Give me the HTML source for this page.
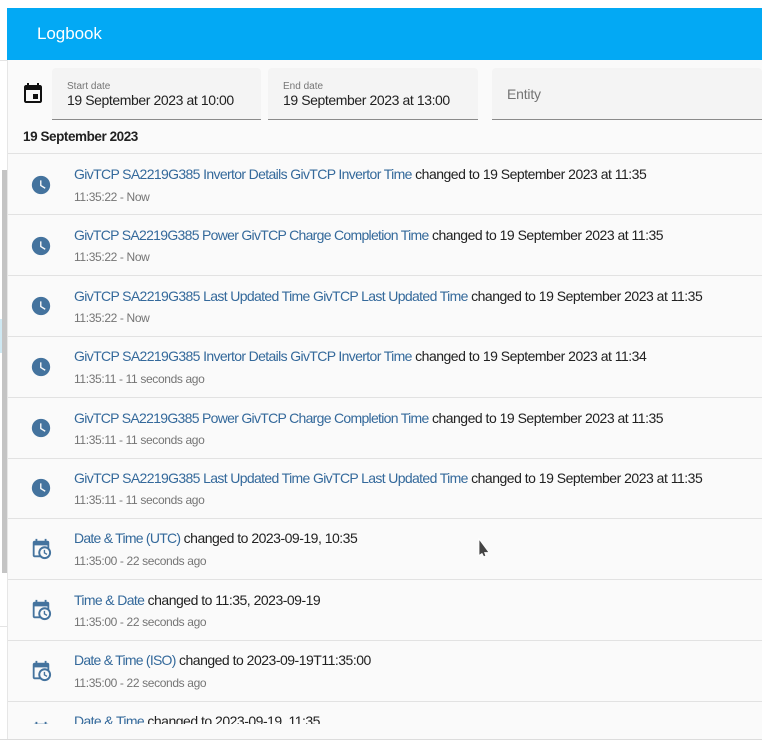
<!DOCTYPE html>
<html><head><meta charset="utf-8">
<style>
html,body{margin:0;padding:0;width:762px;height:748px;overflow:hidden;background:#fff;font-family:"Liberation Sans",sans-serif}
.a{position:absolute}
#page{position:absolute;left:7px;top:8px;width:755px;height:732px;background:#fafafa;border-left:1px solid #e6e6e6;box-sizing:border-box}
#hdr{position:absolute;left:7px;top:8px;width:755px;height:52px;background:#03a9f4}
#hdr span{position:absolute;left:30px;top:16px;font-size:17px;color:#fff;letter-spacing:-.05px}
.fld{position:absolute;top:68px;height:52px;background:#f4f4f4;border-bottom:1px solid #8a8a8a;box-sizing:border-box;border-radius:4px 4px 0 0}
.fld .l{position:absolute;left:15px;top:13px;font-size:10px;color:#757575;white-space:nowrap}
.fld .v{position:absolute;left:15px;top:24px;font-size:14px;color:#212121;white-space:nowrap;letter-spacing:-.41px}
.sep{position:absolute;left:8px;width:754px;height:1px;background:#e2e2e2}
.t{position:absolute;left:74px;font-size:14px;line-height:16px;white-space:nowrap;color:#212121;letter-spacing:-.5px}
.t b{font-weight:400;color:#34699b;letter-spacing:-.64px}
.t b.p{letter-spacing:-.7px}
.t b.d{letter-spacing:-.75px}
.s{position:absolute;left:74px;font-size:12px;line-height:14px;white-space:nowrap;color:#757575;letter-spacing:-.36px}
svg.i{position:absolute;left:30px;width:22px;height:22px}
</style></head><body>
<div class="a" style="left:0;top:60px;width:7px;height:1px;background:#e4e4e4"></div>
<div class="a" style="left:0;top:626px;width:7px;height:1px;background:#e4e4e4"></div>
<div class="a" style="left:0;top:319px;width:2px;height:34px;background:#cfe9f3"></div>
<div id="page"></div>
<div id="hdr"><span>Logbook</span></div>
<div class="a" style="left:2px;top:170px;width:5px;height:403px;background:#c4c4c4"></div>
<svg class="a" style="left:21px;top:82px;width:24px;height:24px" viewBox="0 0 24 24"><path fill="#111" d="M19 19H5V8h14m-3-7v2H8V1H6v2H5c-1.100 0-2 .9-2 2v14c0 1.100.9 2 2 2h14c1.100 0 2-.9 2-2V5c0-1.100-.9-2-2-2h-1V1m-1 11h-5v5h5v-5z"/></svg>
<div class="fld" style="left:52px;width:209px"><span class="l">Start date</span><span class="v">19 September 2023 at 10:00</span></div>
<div class="fld" style="left:268px;width:210px"><span class="l">End date</span><span class="v">19 September 2023 at 13:00</span></div>
<div class="fld" style="left:492px;width:270px"><span class="l" style="top:18px;font-size:14px;letter-spacing:-.2px">Entity</span></div>
<div class="a" style="left:23px;top:129px;font-size:13.5px;font-weight:700;color:#212121;white-space:nowrap;letter-spacing:-.44px">19 September 2023</div>
<div class="sep" style="top:153px"></div><div class="sep" style="top:214px"></div><div class="sep" style="top:275px"></div><div class="sep" style="top:336px"></div><div class="sep" style="top:397px"></div><div class="sep" style="top:458px"></div><div class="sep" style="top:518px"></div><div class="sep" style="top:579px"></div><div class="sep" style="top:640px"></div><div class="sep" style="top:701px"></div>

<svg class="i" style="top:174px" viewBox="0 0 24 24"><path fill="#44739e" d="M12 2a10 10 0 1 0 0 20 10 10 0 0 0 0-20zm4.200 14.200L11 13V7h1.500v5.200l4.500 2.700-.8 1.300z"/></svg>
<div class="t" style="top:166px"><b>GivTCP SA2219G385 Invertor Details GivTCP Invertor Time</b> changed to 19 September 2023 at 11:35</div>
<div class="s" style="top:190px">11:35:22 - Now</div>

<svg class="i" style="top:235px" viewBox="0 0 24 24"><path fill="#44739e" d="M12 2a10 10 0 1 0 0 20 10 10 0 0 0 0-20zm4.200 14.200L11 13V7h1.500v5.200l4.500 2.700-.8 1.300z"/></svg>
<div class="t" style="top:227px"><b class="p">GivTCP SA2219G385 Power GivTCP Charge Completion Time</b> changed to 19 September 2023 at 11:35</div>
<div class="s" style="top:250px">11:35:22 - Now</div>

<svg class="i" style="top:295px" viewBox="0 0 24 24"><path fill="#44739e" d="M12 2a10 10 0 1 0 0 20 10 10 0 0 0 0-20zm4.200 14.200L11 13V7h1.500v5.200l4.500 2.700-.8 1.300z"/></svg>
<div class="t" style="top:288px"><b>GivTCP SA2219G385 Last Updated Time GivTCP Last Updated Time</b> changed to 19 September 2023 at 11:35</div>
<div class="s" style="top:311px">11:35:22 - Now</div>

<svg class="i" style="top:356px" viewBox="0 0 24 24"><path fill="#44739e" d="M12 2a10 10 0 1 0 0 20 10 10 0 0 0 0-20zm4.200 14.200L11 13V7h1.500v5.200l4.500 2.700-.8 1.300z"/></svg>
<div class="t" style="top:348px"><b>GivTCP SA2219G385 Invertor Details GivTCP Invertor Time</b> changed to 19 September 2023 at 11:34</div>
<div class="s" style="top:372px">11:35:11 - 11 seconds ago</div>

<svg class="i" style="top:417px" viewBox="0 0 24 24"><path fill="#44739e" d="M12 2a10 10 0 1 0 0 20 10 10 0 0 0 0-20zm4.200 14.200L11 13V7h1.500v5.200l4.500 2.700-.8 1.300z"/></svg>
<div class="t" style="top:410px"><b class="p">GivTCP SA2219G385 Power GivTCP Charge Completion Time</b> changed to 19 September 2023 at 11:35</div>
<div class="s" style="top:433px">11:35:11 - 11 seconds ago</div>

<svg class="i" style="top:477px" viewBox="0 0 24 24"><path fill="#44739e" d="M12 2a10 10 0 1 0 0 20 10 10 0 0 0 0-20zm4.200 14.200L11 13V7h1.500v5.200l4.500 2.700-.8 1.300z"/></svg>
<div class="t" style="top:470px"><b>GivTCP SA2219G385 Last Updated Time GivTCP Last Updated Time</b> changed to 19 September 2023 at 11:35</div>
<div class="s" style="top:493px">11:35:11 - 11 seconds ago</div>

<svg class="i" style="top:538px" viewBox="0 0 24 24"><path fill="#44739e" d="M15 13h1.500v2.820l2.440 1.410-.75 1.300L15 16.690V13m4-5H5v11h4.670c-.43-.91-.67-1.920-.67-3a7 7 0 0 1 10-6.330V8M5 21c-1.110 0-2-.89-2-2V5c0-1.110.89-2 2-2h1V1h2v2h8V1h2v2h1a2 2 0 0 1 2 2v6.100c1.240 1.260 2 2.990 2 4.900a7 7 0 0 1-7 7c-1.910 0-3.640-.76-4.900-2H5m11-9.850A4.850 4.850 0 0 0 11.150 16 4.850 4.850 0 0 0 16 20.850 4.850 4.850 0 0 0 20.850 16 4.850 4.850 0 0 0 16 11.150z"/></svg>
<div class="t" style="top:530px"><b class="d">Date &amp; Time (UTC)</b> changed to 2023-09-19, 10:35</div>
<div class="s" style="top:554px">11:35:00 - 22 seconds ago</div>

<svg class="i" style="top:599px" viewBox="0 0 24 24"><path fill="#44739e" d="M15 13h1.500v2.820l2.440 1.410-.75 1.300L15 16.690V13m4-5H5v11h4.670c-.43-.91-.67-1.920-.67-3a7 7 0 0 1 10-6.330V8M5 21c-1.110 0-2-.89-2-2V5c0-1.110.89-2 2-2h1V1h2v2h8V1h2v2h1a2 2 0 0 1 2 2v6.100c1.240 1.260 2 2.990 2 4.900a7 7 0 0 1-7 7c-1.910 0-3.640-.76-4.900-2H5m11-9.850A4.850 4.850 0 0 0 11.150 16 4.850 4.850 0 0 0 16 20.850 4.850 4.850 0 0 0 20.850 16 4.850 4.850 0 0 0 16 11.150z"/></svg>
<div class="t" style="top:592px"><b>Time &amp; Date</b> changed to 11:35, 2023-09-19</div>
<div class="s" style="top:615px">11:35:00 - 22 seconds ago</div>

<svg class="i" style="top:660px" viewBox="0 0 24 24"><path fill="#44739e" d="M15 13h1.500v2.820l2.440 1.410-.75 1.300L15 16.690V13m4-5H5v11h4.670c-.43-.91-.67-1.920-.67-3a7 7 0 0 1 10-6.330V8M5 21c-1.110 0-2-.89-2-2V5c0-1.110.89-2 2-2h1V1h2v2h8V1h2v2h1a2 2 0 0 1 2 2v6.100c1.240 1.260 2 2.990 2 4.900a7 7 0 0 1-7 7c-1.910 0-3.640-.76-4.900-2H5m11-9.850A4.850 4.850 0 0 0 11.150 16 4.850 4.850 0 0 0 16 20.850 4.850 4.850 0 0 0 20.850 16 4.850 4.850 0 0 0 16 11.150z"/></svg>
<div class="t" style="top:652px"><b class="d">Date &amp; Time (ISO)</b> changed to 2023-09-19T11:35:00</div>
<div class="s" style="top:676px">11:35:00 - 22 seconds ago</div>

<div class="a" style="left:8px;top:702px;width:754px;height:22px;overflow:hidden">
<svg class="i" style="left:22px;top:19px" viewBox="0 0 24 24"><path fill="#44739e" d="M15 13h1.500v2.820l2.440 1.410-.75 1.300L15 16.690V13m4-5H5v11h4.670c-.43-.91-.67-1.920-.67-3a7 7 0 0 1 10-6.330V8M5 21c-1.110 0-2-.89-2-2V5c0-1.110.89-2 2-2h1V1h2v2h8V1h2v2h1a2 2 0 0 1 2 2v6.100c1.240 1.260 2 2.990 2 4.900a7 7 0 0 1-7 7c-1.910 0-3.640-.76-4.900-2H5m11-9.850A4.850 4.850 0 0 0 11.150 16 4.850 4.850 0 0 0 16 20.850 4.850 4.850 0 0 0 20.850 16 4.850 4.850 0 0 0 16 11.150z"/></svg>
<div class="t" style="left:66px;top:11px"><b>Date &amp; Time</b> changed to 2023-09-19, 11:35</div>
</div>
<div class="a" style="left:0;top:739px;width:762px;height:1px;background:#dcdcdc"></div>
<svg class="a" style="left:477px;top:537px;width:16px;height:22px" viewBox="0 0 16 22"><path d="M2 2v16.500l3-2 1.800 3.300 2-.9-1.200-3.400h4.400z" fill="#444" stroke="#fff" stroke-width=".8"/></svg>
</body></html>
